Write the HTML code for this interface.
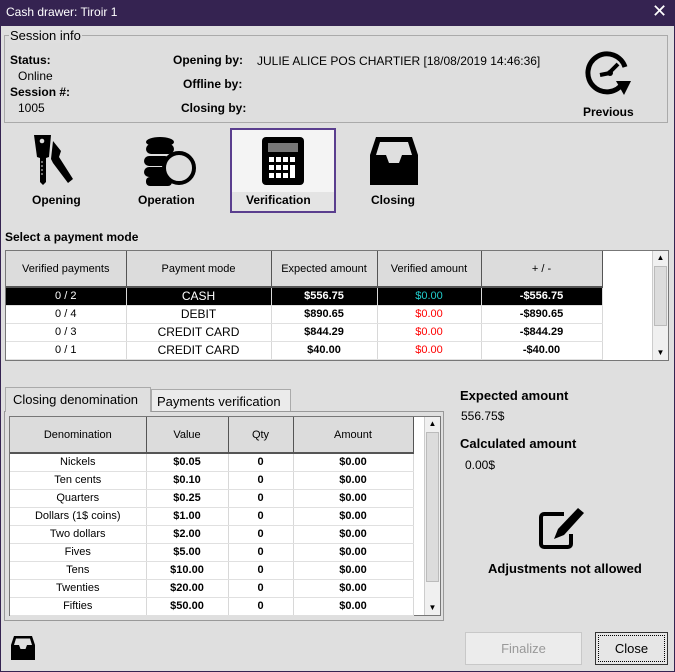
<!DOCTYPE html>
<html><head><meta charset="utf-8"><style>
*{box-sizing:border-box;margin:0;padding:0}
body{width:675px;height:672px;overflow:hidden;background:#352351;font-family:"Liberation Sans",sans-serif;font-size:12px;color:#000;position:relative}
.a{position:absolute}
#win{left:1px;top:26px;width:673px;height:645px;background:#dfdfdf}
.b{font-weight:bold}
table{border-collapse:collapse;position:absolute;background:#fff}
td,th{text-align:center;font-size:11px;padding:0;border-right:1px solid #d8d8d8;border-bottom:1px solid #e0e0e0;white-space:nowrap}
th{background:#dcdcdc;font-weight:normal;border-right:1px solid #555;border-bottom:2px solid #555;font-size:11px}
.sb{background:#f0f0f0;border-left:1px solid #ccc}
.arr{position:absolute;left:0;width:100%;height:14px;font-size:8px;text-align:center;line-height:14px;background:#f0f0f0}
.thumb{position:absolute;left:1px;right:1px;background:#dcdcdc;border:1px solid #bbb}
</style></head><body>
<div class="a" style="left:6px;top:5px;color:#fff;font-size:12px">Cash drawer: Tiroir 1</div>
<div class="a" style="left:652px;top:1px;color:#fff;font-size:18px">✕</div>
<div id="win" class="a"></div>
<!-- session info -->
<div class="a" style="left:4px;top:35px;width:664px;height:88px;border:1px solid #aaa;background:#dedede"></div>
<div class="a" style="left:9px;top:28px;font-size:13px;background:#dfdfdf;padding:0 1px">Session info</div>
<div class="a b" style="left:10px;top:53px;font-size:12px">Status:</div>
<div class="a" style="left:18px;top:69px">Online</div>
<div class="a b" style="left:10px;top:85px">Session #:</div>
<div class="a" style="left:18px;top:101px">1005</div>
<div class="a b" style="left:173px;top:53px">Opening by:</div>
<div class="a" style="left:257px;top:54px">JULIE ALICE POS CHARTIER [18/08/2019 14:46:36]</div>
<div class="a b" style="left:183px;top:77px">Offline by:</div>
<div class="a b" style="left:181px;top:101px">Closing by:</div>
<svg class="a" style="left:585px;top:51px" width="50" height="48" viewBox="0 0 50 48"><path d="M38 32 A19 19 0 1 1 40 16" fill="none" stroke="#000" stroke-width="5"/><path d="M31 30 L46 30 L39 44Z" fill="#000"/><path d="M25 21 L33 13" stroke="#000" stroke-width="4"/><path d="M25 22 L15 24" stroke="#000" stroke-width="4"/><circle cx="25" cy="22" r="3" fill="#000"/></svg>
<div class="a b" style="left:583px;top:105px">Previous</div>
<!-- icons -->
<svg class="a" style="left:33px;top:135px" width="50" height="52" viewBox="0 0 50 52"><path d="M1 0 h17 l-2 22 l-3 1 v24 l-3 3 l-3-3 v-24 l-3-1Z" fill="#000"/><circle cx="9" cy="6" r="2.3" fill="#ddd"/><path d="M8 27 h2 M8 31 h2 M8 35 h2 M8 39 h2" stroke="#ddd" stroke-width="1"/><path d="M20 6 l8 10 l-2 6 l14 22 l-5 4 l-15 -20 l-2 -4Z" fill="#000"/></svg>
<div class="a b" style="left:32px;top:193px">Opening</div>
<svg class="a" style="left:143px;top:135px" width="54" height="52" viewBox="0 0 54 52"><ellipse cx="17" cy="7" rx="14" ry="5" fill="#000"/><rect x="3" y="9" width="28" height="10" rx="5" fill="#000"/><rect x="1" y="21" width="26" height="10" rx="5" fill="#000"/><rect x="1" y="32" width="26" height="10" rx="5" fill="#000"/><rect x="3" y="42" width="26" height="9" rx="4" fill="#000"/><circle cx="36" cy="33" r="15" fill="#ddd" stroke="#000" stroke-width="4"/></svg>
<div class="a b" style="left:138px;top:193px">Operation</div>
<div class="a" style="left:230px;top:128px;width:106px;height:85px;border:2px solid #5a3e8e;background:#f4f4f4"></div>
<div class="a" style="left:232px;top:192px;width:102px;height:19px;background:#e4e4e4"></div>
<svg class="a" style="left:262px;top:137px" width="42" height="48" viewBox="0 0 42 48"><rect x="0" y="0" width="42" height="48" rx="4" fill="#000"/><rect x="6" y="6" width="30" height="9" fill="#777"/><g fill="#fff"><rect x="7" y="20" width="5" height="5"/><rect x="14" y="20" width="5" height="5"/><rect x="21" y="20" width="5" height="5"/><rect x="28" y="20" width="5" height="5"/><rect x="7" y="28" width="5" height="5"/><rect x="14" y="28" width="5" height="5"/><rect x="21" y="28" width="5" height="5"/><rect x="28" y="28" width="5" height="13"/><rect x="7" y="36" width="5" height="5"/><rect x="14" y="36" width="5" height="5"/><rect x="21" y="36" width="5" height="5"/></g></svg>
<div class="a b" style="left:246px;top:193px">Verification</div>
<svg class="a" style="left:370px;top:137px" width="48" height="48" viewBox="0 0 48 48"><path d="M6 0 h36 l6 18 v30 h-48 v-30Z" fill="#000"/><path d="M10 5 h28 l4 13 h-10 l-3 8 h-10 l-3-8 h-10Z" fill="#dfdfdf"/></svg>
<div class="a b" style="left:371px;top:193px">Closing</div>
<!-- payment table -->
<div class="a b" style="left:5px;top:230px;font-size:12px">Select a payment mode</div>
<div class="a" style="left:5px;top:250px;width:664px;height:111px;border:1px solid #777;background:#fff"></div>
<table style="left:6px;top:251px">
<tr style="height:36px"><th style="width:120px">Verified payments</th><th style="width:145px">Payment mode</th><th style="width:106px">Expected amount</th><th style="width:104px">Verified amount</th><th style="width:121px">+ / -</th></tr>
<tr style="height:18px;background:#000;color:#fff"><td>0 / 2</td><td style="font-size:12px">CASH</td><td class="b">$556.75</td><td style="color:#2cc;">$0.00</td><td class="b">-$556.75</td></tr>
<tr style="height:18px"><td>0 / 4</td><td style="font-size:12px">DEBIT</td><td class="b">$890.65</td><td style="color:#f00">$0.00</td><td class="b">-$890.65</td></tr>
<tr style="height:18px"><td>0 / 3</td><td style="font-size:12px">CREDIT CARD</td><td class="b">$844.29</td><td style="color:#f00">$0.00</td><td class="b">-$844.29</td></tr>
<tr style="height:18px"><td>0 / 1</td><td style="font-size:12px">CREDIT CARD</td><td class="b">$40.00</td><td style="color:#f00">$0.00</td><td class="b">-$40.00</td></tr>
</table>
<div class="a sb" style="left:652px;top:251px;width:16px;height:109px"><div class="arr" style="top:0">▲</div><div class="thumb" style="top:15px;height:60px"></div><div class="arr" style="bottom:0">▼</div></div>
<!-- tabs -->
<div class="a" style="left:4px;top:411px;width:440px;height:210px;border:1px solid #999;background:#dfdfdf"></div>
<div class="a" style="left:151px;top:389px;width:140px;height:22px;border:1px solid #aaa;border-bottom:none;background:#ebebeb;font-size:13px;padding:4px 0 0 5px">Payments verification</div>
<div class="a" style="left:5px;top:387px;width:146px;height:25px;border:1px solid #aaa;border-bottom:none;background:#dfdfdf;font-size:13px;padding:4px 0 0 7px">Closing denomination</div>
<div class="a" style="left:9px;top:416px;width:432px;height:200px;border:1px solid #777;background:#fff"></div>
<table style="left:10px;top:417px">
<tr style="height:36px"><th style="width:136px">Denomination</th><th style="width:82px">Value</th><th style="width:65px">Qty</th><th style="width:120px">Amount</th></tr>
<tr style="height:18px"><td>Nickels</td><td class="b">$0.05</td><td class="b">0</td><td class="b">$0.00</td></tr>
<tr style="height:18px"><td>Ten cents</td><td class="b">$0.10</td><td class="b">0</td><td class="b">$0.00</td></tr>
<tr style="height:18px"><td>Quarters</td><td class="b">$0.25</td><td class="b">0</td><td class="b">$0.00</td></tr>
<tr style="height:18px"><td>Dollars (1$ coins)</td><td class="b">$1.00</td><td class="b">0</td><td class="b">$0.00</td></tr>
<tr style="height:18px"><td>Two dollars</td><td class="b">$2.00</td><td class="b">0</td><td class="b">$0.00</td></tr>
<tr style="height:18px"><td>Fives</td><td class="b">$5.00</td><td class="b">0</td><td class="b">$0.00</td></tr>
<tr style="height:18px"><td>Tens</td><td class="b">$10.00</td><td class="b">0</td><td class="b">$0.00</td></tr>
<tr style="height:18px"><td>Twenties</td><td class="b">$20.00</td><td class="b">0</td><td class="b">$0.00</td></tr>
<tr style="height:18px"><td>Fifties</td><td class="b">$50.00</td><td class="b">0</td><td class="b">$0.00</td></tr>
</table>
<div class="a sb" style="left:424px;top:417px;width:16px;height:198px"><div class="arr" style="top:0">▲</div><div class="thumb" style="top:15px;height:150px"></div><div class="arr" style="bottom:0">▼</div></div>
<!-- right -->
<div class="a b" style="left:460px;top:388px;font-size:13px">Expected amount</div>
<div class="a" style="left:461px;top:409px">556.75$</div>
<div class="a b" style="left:460px;top:436px;font-size:13px">Calculated amount</div>
<div class="a" style="left:465px;top:458px">0.00$</div>
<svg class="a" style="left:538px;top:506px" width="50" height="44" viewBox="0 0 50 44"><path d="M26 8 H6 a3 3 0 0 0 -3 3 V38 a3 3 0 0 0 3 3 H30 a3 3 0 0 0 3 -3 V28" fill="none" stroke="#000" stroke-width="4"/><path d="M40 2 l6 5 l-20 22 l-10 4 l4 -10Z" fill="#000"/></svg>
<div class="a b" style="left:488px;top:561px;font-size:13px">Adjustments not allowed</div>
<!-- bottom -->
<svg class="a" style="left:11px;top:636px" width="24" height="24" viewBox="0 0 48 48"><path d="M6 0 h36 l6 18 v30 h-48 v-30Z" fill="#000"/><path d="M10 5 h28 l4 13 h-10 l-3 8 h-10 l-3-8 h-10Z" fill="#dfdfdf"/></svg>
<div class="a" style="left:465px;top:632px;width:117px;height:33px;border:1px solid #c8c8c8;background:#ececec;color:#999;text-align:center;line-height:31px;font-size:13px">Finalize</div>
<div class="a" style="left:595px;top:632px;width:73px;height:33px;border:1px solid #333;background:#e6e6e6;padding:2px"><div style="border:1px dotted #000;height:100%;text-align:center;line-height:26px;font-size:13px">Close</div></div>
</body></html>
